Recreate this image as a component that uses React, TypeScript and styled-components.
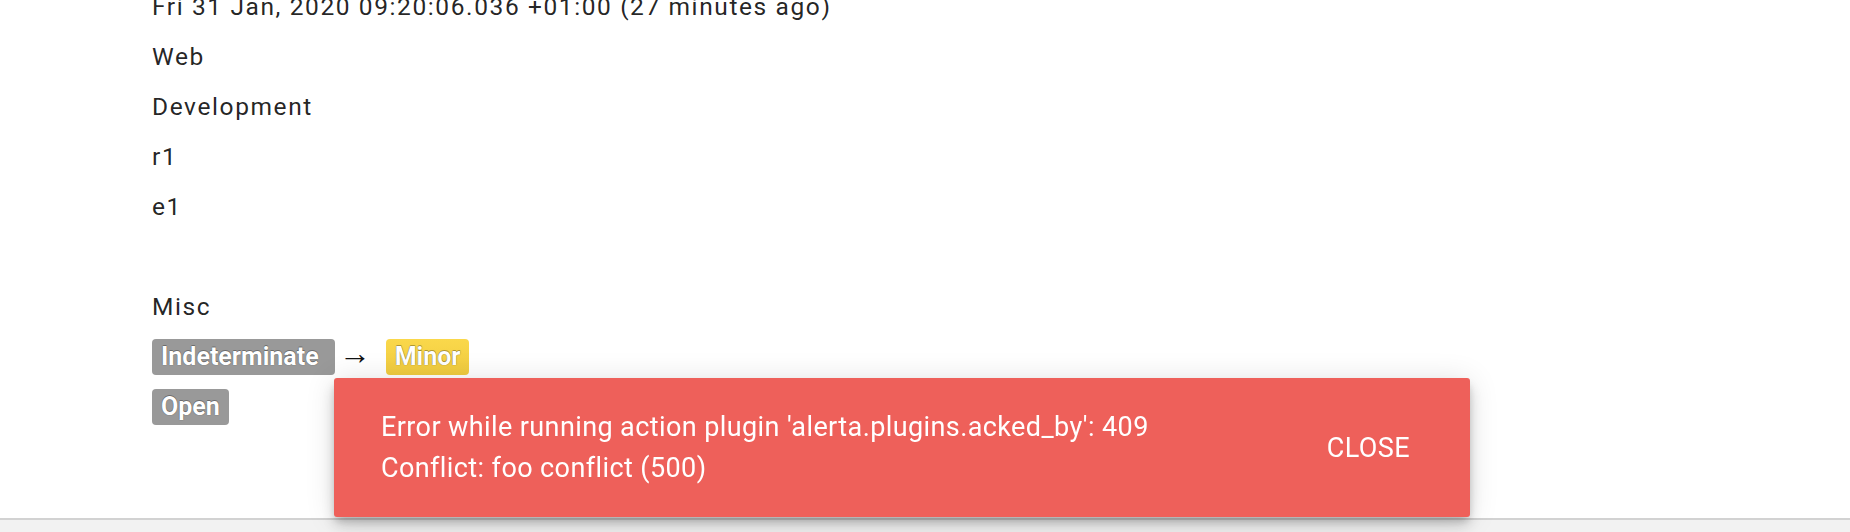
import React from "react";
import styled, { createGlobalStyle } from "styled-components";

const Global = createGlobalStyle`
  html, body { margin: 0; padding: 0; height: 100%; background: #fff; overflow: hidden; }
  body { font-family: Roboto, "Noto Sans", sans-serif; color: rgba(0,0,0,0.87); }
  #root { height: 100%; }
`;

const Page = styled.div`
  display: flex;
  flex-direction: column;
  height: 100vh;
`;

const Content = styled.main`
  flex: 1;
  overflow: hidden;
  padding-left: 152px;
`;

const Rows = styled.div`
  margin-top: -18px;
  display: flex;
  flex-direction: column;
`;

const Row = styled.div`
  height: 50px;
  display: flex;
  align-items: center;
  font-size: 24.5px;
  letter-spacing: 1.6px;
  line-height: 50px;
  white-space: nowrap;
`;

const Label = styled.span<{ $tone: "grey" | "minor"; $trail?: boolean }>`
  display: inline-block;
  height: 36px;
  line-height: 36px;
  padding: 0 ${(p) => (p.$trail ? "16px" : "9px")} 0 9px;
  border-radius: 4px;
  font-size: 25px;
  font-weight: 700;
  letter-spacing: 0;
  color: #fff;
  text-shadow: 0 0 1px rgba(0, 0, 0, 0.55), 0 -1px 0 rgba(0, 0, 0, 0.25);
  background: ${(p) =>
    p.$tone === "minor" ? "linear-gradient(#fad84b, #f0cb3f)" : "#999999"};
`;

const Arrow = styled.span`
  margin: 0 15px 0 4px;
  padding-bottom: 8px;
  font-size: 32px;
  font-weight: 700;
  letter-spacing: 0;
  color: #111;
  line-height: 36px;
`;

const Footer = styled.footer`
  flex: 0 0 12px;
  border-top: 2px solid #d2d2d2;
  background: #f2f2f2;
`;

const Snackbar = styled.div`
  position: fixed;
  left: 334px;
  bottom: 15px;
  width: 1136px;
  height: 139px;
  box-sizing: border-box;
  display: flex;
  align-items: center;
  justify-content: space-between;
  padding: 0 60px 0 47px;
  background: #ee605a;
  border-radius: 3px;
  color: #fff;
  box-shadow: 0 5px 8px -2px rgba(0, 0, 0, 0.2), 0 9px 15px 0 rgba(0, 0, 0, 0.14),
    0 2px 30px 0 rgba(0, 0, 0, 0.12);
`;

const Message = styled.div`
  font-size: 27px;
  letter-spacing: 0.4px;
  line-height: 41px;
`;

const CloseButton = styled.button`
  background: none;
  border: 0;
  padding: 0;
  color: #fff;
  font-family: Roboto, "Noto Sans", sans-serif;
  font-size: 27px;
  letter-spacing: 0.4px;
  text-transform: uppercase;
  cursor: pointer;
`;

const rows = [
  "Fri 31 Jan, 2020 09:20:06.036 +01:00 (27 minutes ago)",
  "Web",
  "Development",
  "r1",
  "e1",
  "",
  "Misc",
];

export default function App() {
  return (
    <>
      <Global />
      <Page>
        <Content>
          <Rows>
            {rows.map((r, i) => (
              <Row key={i}>{r}</Row>
            ))}
            <Row>
              <Label $tone="grey" $trail>
                Indeterminate
              </Label>
              <Arrow>→</Arrow>
              <Label $tone="minor">Minor</Label>
            </Row>
            <Row>
              <Label $tone="grey">Open</Label>
            </Row>
          </Rows>
        </Content>
        <Footer />
      </Page>
      <Snackbar>
        <Message>
          Error while running action plugin 'alerta.plugins.acked_by': 409
          <br />
          Conflict: foo conflict (500)
        </Message>
        <CloseButton>Close</CloseButton>
      </Snackbar>
    </>
  );
}
